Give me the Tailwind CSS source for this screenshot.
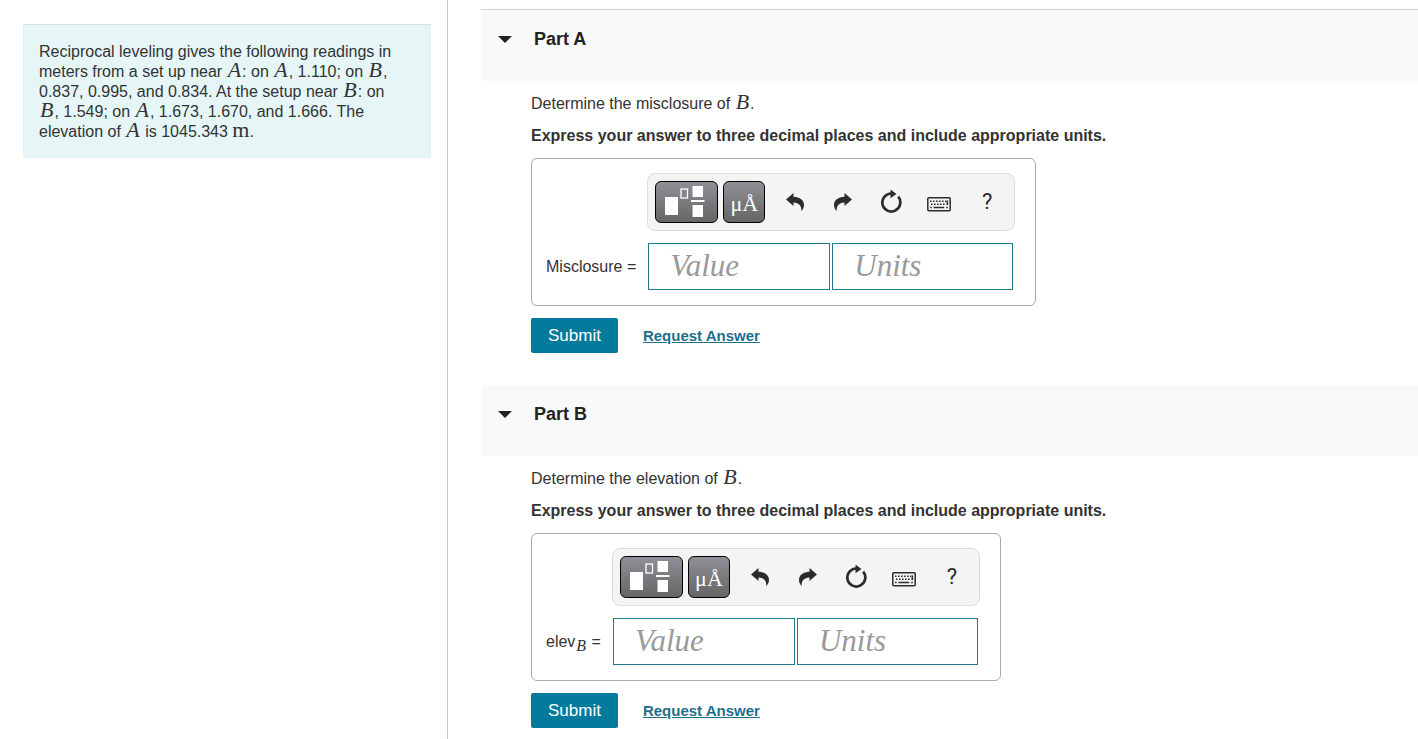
<!DOCTYPE html>
<html lang="en">
<head>
    <meta charset="UTF-8">
    <meta name="viewport" content="width=device-width, initial-scale=1.0">
    <title>Reciprocal Leveling</title>
    <script src="https://cdn.jsdelivr.net/npm/@tailwindcss/browser@4"></script>
</head>
<body class="bg-white font-['Liberation_Sans',Arial,sans-serif] text-base leading-5 text-[#333]">
    <!-- Shared toolbar icons -->
    <svg class="hidden">
        <symbol id="icon-template" viewBox="0 0 61 40">
            <rect x="9" y="15" width="13" height="18" fill="#fff"/>
            <rect x="25" y="7" width="6.5" height="9" fill="none" stroke="#fff" stroke-width="1.3"/>
            <rect x="36.5" y="4" width="10.5" height="11" fill="#fff"/>
            <rect x="35" y="18" width="13.5" height="2" fill="#fff"/>
            <rect x="36.5" y="23" width="10.5" height="12" fill="#fff"/>
        </symbol>
        <symbol id="icon-undo" viewBox="0 0 18 18">
            <path d="M0 6.5 7.5 0V3.8C14 4 18 7.2 18 12C18 14.4 17 16.4 15.3 18C15.6 13 13.2 9.8 7.5 9.6V13Z"/>
        </symbol>
        <symbol id="icon-redo" viewBox="0 0 18 18">
            <path d="M18 6.5 10.5 0V3.8C4 4 0 7.2 0 12C0 14.4 1 16.4 2.7 18C2.4 13 4.8 9.8 10.5 9.6V13Z"/>
        </symbol>
        <symbol id="icon-reset" viewBox="0 0 24 24">
            <path d="M12.5 3.5A9 9 0 1 0 19.2 6.7" fill="none" stroke="currentColor" stroke-width="2.7"/>
            <path d="M11.5 -0.5 17.5 4 11.5 8.2Z"/>
        </symbol>
        <symbol id="icon-keyboard" viewBox="0 0 24 15">
            <rect x="0.8" y="0.8" width="22.4" height="13" rx="1" fill="none" stroke="currentColor" stroke-width="1.5"/>
            <path d="M3 4.2H19M4 7.3H19" fill="none" stroke="currentColor" stroke-width="1.6" stroke-dasharray="1.6 1.4"/>
            <path d="M20.3 3.4V8" fill="none" stroke="currentColor" stroke-width="1.6"/>
            <path d="M3 10.6H4.6M6.5 10.6H17.2M19.2 10.6H20.8" fill="none" stroke="currentColor" stroke-width="1.5"/>
        </symbol>
    </svg>

    <div class="flex min-h-screen">
        <aside class="w-[448px] shrink-0 border-r border-[#c8c8cc] pt-6 pr-4 pl-[23px]">
            <p class="border-t border-[#d3e3e3] bg-[#e6f6f6] pt-[17px] pr-[34px] pb-4 pl-4">Reciprocal leveling gives the following readings in meters from a set up near <i class="px-px font-['Liberation_Serif',serif] text-[22px] leading-[0]">A</i>: on <i class="px-px font-['Liberation_Serif',serif] text-[22px] leading-[0]">A</i>, 1.110; on <i class="px-px font-['Liberation_Serif',serif] text-[22px] leading-[0]">B</i>, 0.837, 0.995, and 0.834. At the setup near <i class="px-px font-['Liberation_Serif',serif] text-[22px] leading-[0]">B</i>: on <i class="px-px font-['Liberation_Serif',serif] text-[22px] leading-[0]">B</i>, 1.549; on <i class="px-px font-['Liberation_Serif',serif] text-[22px] leading-[0]">A</i>, 1.673, 1.670, and 1.666. The elevation of <i class="px-px font-['Liberation_Serif',serif] text-[22px] leading-[0]">A</i> is 1045.343 <span class="font-['Liberation_Serif',serif] text-[22px] leading-[0]">m</span>.</p>
        </aside>

        <main class="min-w-0 flex-1 pt-[9px] pl-[33px]">
            <!-- Part A -->
            <section>
                <div class="h-[72px] border-t border-[#d5d5d5] bg-[#f9f9f9] pt-[19px] pl-[17px]">
                    <button type="button" class="flex items-center gap-[22px]">
                        <svg class="h-[7px] w-[14px] fill-[#222]" viewBox="0 0 14 7"><path d="M0 0H14L7 7Z"/></svg>
                        <h2 class="text-lg leading-5 font-bold text-[#222]">Part A</h2>
                    </button>
                </div>
                <div class="flex flex-col items-start gap-3 pt-[13px] pb-8 pl-[50px]">
                    <p>Determine the misclosure of <i class="px-px font-['Liberation_Serif',serif] text-[22px] leading-[0]">B</i>.</p>
                    <p class="font-bold">Express your answer to three decimal places and include appropriate units.</p>
                    <form id="partA" class="grid grid-cols-[auto_auto] items-center gap-x-[11px] gap-y-3 rounded-md border border-[#aaa] pt-[14px] pr-5 pb-[15px] pl-[14px]">
                        <div class="col-start-2 flex h-[58px] items-center rounded-lg border border-[#ddd] bg-[#f4f4f4] pr-[3px] pl-[7px] text-[#2c2c2c]">
                            <button type="button" aria-label="Templates" class="mr-[5px] h-[42px] w-[63px] rounded-md border border-black bg-linear-to-b from-[#8f8f97] to-[#666]"><svg class="h-10 w-[61px]"><use href="#icon-template"/></svg></button>
                            <button type="button" class="mr-[6px] h-[42px] w-[42px] rounded-md border border-black bg-linear-to-b from-[#8f8f97] to-[#666] pt-1 font-['Liberation_Serif',serif] text-[22px] leading-8 text-white">μÅ</button>
                            <button type="button" aria-label="Undo" class="flex w-12 justify-center"><svg class="size-[18px] fill-current"><use href="#icon-undo"/></svg></button>
                            <button type="button" aria-label="Redo" class="flex w-12 justify-center"><svg class="size-[18px] fill-current"><use href="#icon-redo"/></svg></button>
                            <button type="button" aria-label="Reset" class="flex w-12 justify-center"><svg class="size-6 overflow-visible fill-current"><use href="#icon-reset"/></svg></button>
                            <button type="button" aria-label="Keyboard shortcuts" class="flex w-12 justify-center pt-[5px]"><svg class="h-[15px] w-6 fill-current"><use href="#icon-keyboard"/></svg></button>
                            <button type="button" class="w-12 font-[Roboto,sans-serif] text-[22px] leading-6">?</button>
                        </div>
                        <label for="valueA">Misclosure =</label>
                        <div class="flex gap-0.5 px-px">
                            <input type="text" id="valueA" placeholder="Value" class="h-[47px] w-[182px] border border-[#1f7a8c] pb-0.5 pl-[21px] font-['Liberation_Serif',serif] text-[31px] italic placeholder:text-[#999]">
                            <input type="text" aria-label="Units" placeholder="Units" class="h-[47px] w-[181px] border border-[#1f7a8c] pb-0.5 pl-[21px] font-['Liberation_Serif',serif] text-[31px] italic placeholder:text-[#999]">
                        </div>
                    </form>
                    <div class="flex items-center gap-[25px]">
                        <button type="submit" form="partA" class="h-[35px] rounded-xs bg-[#047a9c] px-[17px] text-[17px] leading-5 text-white">Submit</button>
                        <a href="#" class="text-[15px] font-bold text-[#1f6f8b] underline">Request Answer</a>
                    </div>
                </div>
            </section>

            <!-- Part B -->
            <section>
                <div class="h-[71px] bg-[#f9f9f9] pt-[19px] pl-[17px]">
                    <button type="button" class="flex items-center gap-[22px]">
                        <svg class="h-[7px] w-[14px] fill-[#222]" viewBox="0 0 14 7"><path d="M0 0H14L7 7Z"/></svg>
                        <h2 class="text-lg leading-5 font-bold text-[#222]">Part B</h2>
                    </button>
                </div>
                <div class="flex flex-col items-start gap-3 pt-[13px] pl-[50px]">
                    <p>Determine the elevation of <i class="px-px font-['Liberation_Serif',serif] text-[22px] leading-[0]">B</i>.</p>
                    <p class="font-bold">Express your answer to three decimal places and include appropriate units.</p>
                    <form id="partB" class="grid grid-cols-[auto_auto] items-center gap-x-[11px] gap-y-3 rounded-md border border-[#aaa] pt-[14px] pr-5 pb-[15px] pl-[14px]">
                        <div class="col-start-2 flex h-[58px] items-center rounded-lg border border-[#ddd] bg-[#f4f4f4] pr-[3px] pl-[7px] text-[#2c2c2c]">
                            <button type="button" aria-label="Templates" class="mr-[5px] h-[42px] w-[63px] rounded-md border border-black bg-linear-to-b from-[#8f8f97] to-[#666]"><svg class="h-10 w-[61px]"><use href="#icon-template"/></svg></button>
                            <button type="button" class="mr-[6px] h-[42px] w-[42px] rounded-md border border-black bg-linear-to-b from-[#8f8f97] to-[#666] pt-1 font-['Liberation_Serif',serif] text-[22px] leading-8 text-white">μÅ</button>
                            <button type="button" aria-label="Undo" class="flex w-12 justify-center"><svg class="size-[18px] fill-current"><use href="#icon-undo"/></svg></button>
                            <button type="button" aria-label="Redo" class="flex w-12 justify-center"><svg class="size-[18px] fill-current"><use href="#icon-redo"/></svg></button>
                            <button type="button" aria-label="Reset" class="flex w-12 justify-center"><svg class="size-6 overflow-visible fill-current"><use href="#icon-reset"/></svg></button>
                            <button type="button" aria-label="Keyboard shortcuts" class="flex w-12 justify-center pt-[5px]"><svg class="h-[15px] w-6 fill-current"><use href="#icon-keyboard"/></svg></button>
                            <button type="button" class="w-12 font-[Roboto,sans-serif] text-[22px] leading-6">?</button>
                        </div>
                        <label for="valueB">elev<sub class="px-px font-['Liberation_Serif',serif] text-base leading-none italic">B</sub> =</label>
                        <div class="flex gap-0.5 px-px">
                            <input type="text" id="valueB" placeholder="Value" class="h-[47px] w-[182px] border border-[#1f7a8c] pb-0.5 pl-[21px] font-['Liberation_Serif',serif] text-[31px] italic placeholder:text-[#999]">
                            <input type="text" aria-label="Units" placeholder="Units" class="h-[47px] w-[181px] border border-[#1f7a8c] pb-0.5 pl-[21px] font-['Liberation_Serif',serif] text-[31px] italic placeholder:text-[#999]">
                        </div>
                    </form>
                    <div class="flex items-center gap-[25px]">
                        <button type="submit" form="partB" class="h-[35px] rounded-xs bg-[#047a9c] px-[17px] text-[17px] leading-5 text-white">Submit</button>
                        <a href="#" class="text-[15px] font-bold text-[#1f6f8b] underline">Request Answer</a>
                    </div>
                </div>
            </section>
        </main>
    </div>
</body>
</html>
